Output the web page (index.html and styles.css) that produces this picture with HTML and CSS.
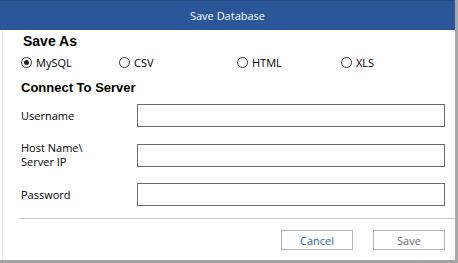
FILE: index.html
```html
<!DOCTYPE html>
<html lang="en">
<head>
    <meta charset="UTF-8">
    <title>Save Database</title>
    <link rel="stylesheet" href="styles.css">
</head>
<body>
    <div class="dialog">
        <div class="title-bar">Save Database</div>

        <div class="content">
            <h1 class="section-title save-as">Save As</h1>

            <div class="format-row">
                <label class="radio-option"><span class="radio checked"></span>MySQL</label>
                <label class="radio-option"><span class="radio"></span>CSV</label>
                <label class="radio-option"><span class="radio"></span>HTML</label>
                <label class="radio-option"><span class="radio"></span>XLS</label>
            </div>

            <h2 class="section-title">Connect To Server</h2>

            <div class="server-form">
                <label for="username">Username</label>
                <input type="text" id="username" class="form-input">

                <label for="host">Host Name\<br>Server IP</label>
                <input type="text" id="host" class="form-input">

                <label for="password">Password</label>
                <input type="password" id="password" class="form-input">
            </div>

            <div class="footer">
                <button class="dialog-button cancel-button">Cancel</button>
                <button class="dialog-button save-button" disabled>Save</button>
            </div>
        </div>
    </div>
</body>
</html>
```

FILE: styles.css
```css
body {
    margin: 0;
    background-color: #ffffff;
    font-family: 'Open Sans', sans-serif;
}

.dialog {
    box-sizing: border-box;
    width: 458px;
    height: 263px;
    display: flex;
    flex-direction: column;
    border-right: 3px solid #a9a9a9;
    border-bottom: 3px solid #a4a4a4;
    background-color: #ffffff;
}

.title-bar {
    height: 30px;
    line-height: 30px;
    text-align: center;
    background-color: #2b579a;
    border-top: 1px solid #24497f;
    box-sizing: border-box;
    color: #ffffff;
    font-size: 11px;
}

.content {
    flex: 1;
    margin-left: 2px;
    border-left: 1px solid #ececec;
    padding: 3px 10px 0 18px;
}

.section-title {
    margin: 0;
    font-family: 'Liberation Sans', Arial, sans-serif;
    font-weight: bold;
    font-size: 13px;
    line-height: 16px;
    color: #000000;
}

.save-as {
    font-size: 14px;
    padding-left: 2px;
}

.format-row {
    display: grid;
    grid-template-columns: 98px 118px 104px auto;
    margin-top: 6px;
    margin-bottom: 11px;
}

.radio-option {
    display: flex;
    align-items: center;
    height: 14px;
    font-size: 11px;
    color: #000000;
}

.radio {
    box-sizing: border-box;
    width: 11px;
    height: 11px;
    margin-right: 4px;
    border: 1px solid #333333;
    border-radius: 50%;
    display: flex;
    align-items: center;
    justify-content: center;
}

.radio.checked::after {
    content: "";
    width: 5px;
    height: 5px;
    border-radius: 50%;
    background-color: #222222;
}

.server-form {
    display: grid;
    grid-template-columns: 116px 1fr;
    row-gap: 14px;
    align-items: center;
    margin-top: 8px;
}

.server-form label {
    font-size: 11px;
    line-height: 14px;
    color: #000000;
}

.form-input {
    box-sizing: border-box;
    width: 100%;
    height: 23px;
    margin: 0;
    border: 1px solid #6b6b6b;
    background-color: #ffffff;
}

.footer {
    display: flex;
    justify-content: flex-end;
    gap: 20px;
    margin: 12px -10px 0 -1px;
    padding: 11px 10px 0 0;
    border-top: 1px solid #c6c6c6;
}

.dialog-button {
    width: 72px;
    height: 20px;
    padding: 0;
    border: 1px solid #b5b5b5;
    background-color: #ffffff;
    font-family: 'Open Sans', sans-serif;
    font-size: 11px;
}

.cancel-button {
    color: #2367a8;
}

.save-button {
    color: #6a6a6a;
}
```
